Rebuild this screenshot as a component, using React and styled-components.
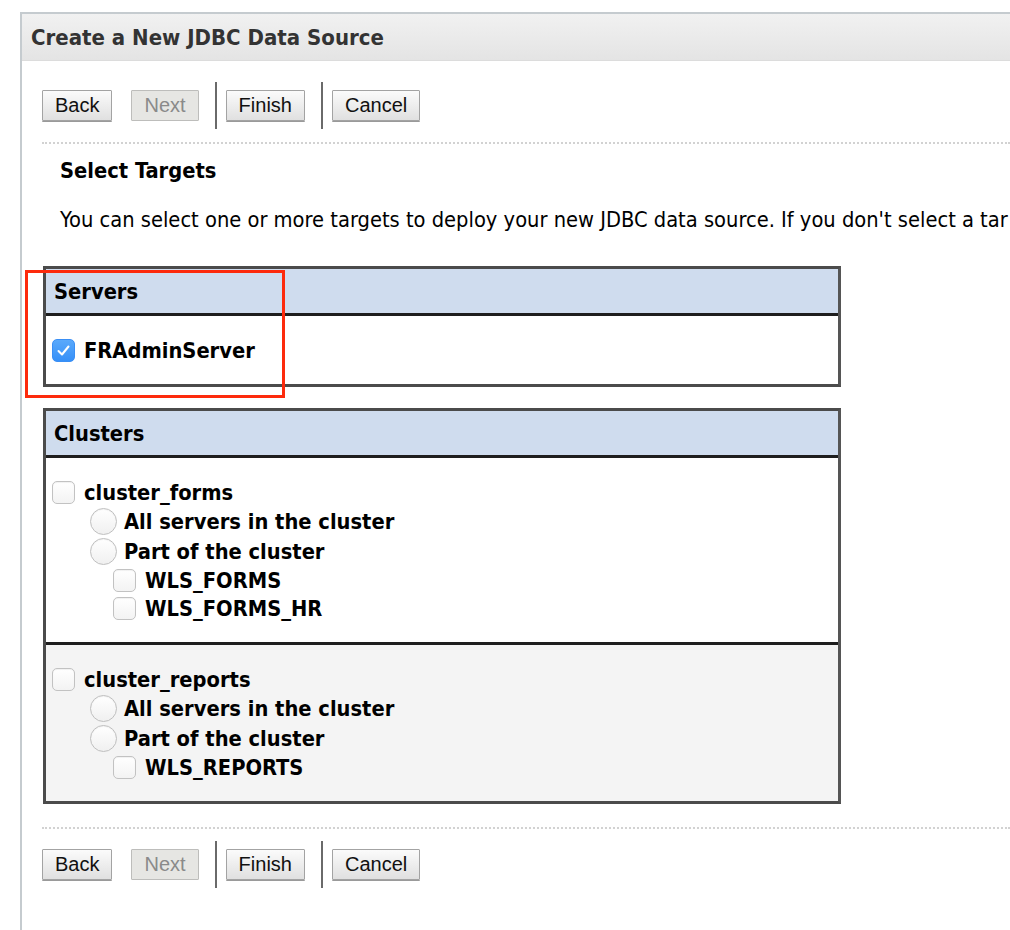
import React from "react";
import styled, { createGlobalStyle } from "styled-components";

const GlobalStyle = createGlobalStyle`
  body {
    margin: 0;
    background: #ffffff;
    font-family: "DejaVu Sans Condensed", "DejaVu Sans", sans-serif;
    color: #000;
    overflow: hidden;
  }
`;

const Page = styled.div`
  position: relative;
  margin: 12px 0 0 20px;
  height: 918px;
  overflow: hidden;
  border-left: 2px solid #c5cbcf;
  border-top: 2px solid #c5cbcf;
`;

const TitleBar = styled.div`
  height: 46px;
  display: flex;
  align-items: center;
  padding-left: 9px;
  background: linear-gradient(#f1f1f1, #e4e4e4);
  border-bottom: 1px solid #dcdcdc;
`;

const Title = styled.h1`
  margin: 0;
  font-size: 22px;
  font-weight: bold;
  color: #333333;
`;

const Content = styled.div`
  padding-left: 20px;
`;

const ButtonBar = styled.div`
  display: flex;
  align-items: center;
  height: 47px;
  padding-top: ${(p) => p.top}px;
`;

const Button = styled.button`
  height: 31px;
  padding: 0 12px;
  font-family: "Liberation Sans", Arial, sans-serif;
  font-size: 20px;
  border: 1px solid ${(p) => (p.disabled ? "#bdbdbb" : "#a3a3a3")};
  border-radius: 1px;
  color: ${(p) => (p.disabled ? "#8a8a8a" : "#111")};
  background: ${(p) =>
    p.disabled ? "#e6e6e3" : "linear-gradient(#fbfbfb, #e0e0e0)"};
  margin-right: ${(p) => p.gap || 0}px;
  box-shadow: ${(p) => (p.disabled ? "none" : "0 1px 0 #9a9a9a")};
`;

const Separator = styled.div`
  width: 2px;
  height: 47px;
  background: #6a6a6a;
  margin-right: 9px;
`;

const Dotted = styled.div`
  border-top: 2px dotted #d2d2d2;
  margin-top: ${(p) => p.top}px;
`;

const Section = styled.div`
  padding-left: 18px;
`;

const SectionTitle = styled.h2`
  margin: 15px 0 0;
  font-size: 21.7px;
  font-weight: bold;
  line-height: 24px;
`;

const Description = styled.p`
  margin: 25px 0 0;
  font-size: 21.7px;
  line-height: 24px;
  white-space: nowrap;
`;

const Table = styled.div`
  width: 792px;
  margin: ${(p) => p.top}px 0 0 1px;
  border: 3px solid #4b4b4b;
  border-right-color: #555;
`;

const HeaderCell = styled.div`
  height: 44px;
  display: flex;
  align-items: center;
  padding-left: 8px;
  background: #cfdcee;
  font-size: 21.7px;
  font-weight: bold;
  border-bottom: 3px solid #1e1e1e;
`;

const Body = styled.div`
  padding: ${(p) => p.pad}px 0;
  background: ${(p) => (p.shaded ? "#f4f4f4" : "#ffffff")};
  border-top: ${(p) => (p.divider ? "3px solid #1e1e1e" : "none")};
`;

const Row = styled.div`
  display: flex;
  align-items: center;
  height: ${(p) => (p.radio ? 30 : 28)}px;
  padding-left: ${(p) => p.indent}px;
  font-size: 21.7px;
  font-weight: bold;
  white-space: nowrap;
`;

const Box = styled.span`
  box-sizing: border-box;
  width: 23px;
  height: 23px;
  border-radius: 5px;
  margin-right: 9px;
  display: flex;
  align-items: center;
  justify-content: center;
  border: 1px solid ${(p) => (p.checked ? "#3a8ff5" : "#c2c2c2")};
  background: ${(p) =>
    p.checked ? "linear-gradient(#5aa9fb, #3690f8)" : "linear-gradient(#ffffff, #f3f3f3)"};
  box-shadow: ${(p) => (p.checked ? "none" : "inset 0 1px 1px rgba(0,0,0,0.06)")};
`;

const Radio = styled.span`
  box-sizing: border-box;
  width: 27px;
  height: 27px;
  border-radius: 50%;
  margin-right: 7px;
  border: 1px solid #bfbfbf;
  background: linear-gradient(#ffffff, #f0f0f0);
  box-shadow: inset 0 1px 1px rgba(0,0,0,0.05);
`;

const Highlight = styled.div`
  position: absolute;
  left: 3px;
  top: 256px;
  width: 254px;
  height: 122px;
  border: 3px solid #fd2a0c;
`;

const Check = ({ checked }) => (
  <Box checked={checked}>
    {checked && (
      <svg width="15" height="13" viewBox="0 0 15 13">
        <path
          d="M2.5 7 L6 10.5 L12.5 2.5"
          fill="none"
          stroke="#ffffff"
          strokeWidth="2"
          strokeLinecap="round"
          strokeLinejoin="round"
        />
      </svg>
    )}
  </Box>
);

const Buttons = ({ top }) => (
  <ButtonBar top={top}>
    <Button gap={19}>Back</Button>
    <Button disabled gap={16}>Next</Button>
    <Separator />
    <Button gap={16}>Finish</Button>
    <Separator />
    <Button>Cancel</Button>
  </ButtonBar>
);

const clusters = [
  { name: "cluster_forms", servers: ["WLS_FORMS", "WLS_FORMS_HR"] },
  { name: "cluster_reports", servers: ["WLS_REPORTS"] },
];

export default function App() {
  return (
    <>
      <GlobalStyle />
      <Page>
        <TitleBar>
          <Title>Create a New JDBC Data Source</Title>
        </TitleBar>
        <Content>
          <Buttons top={21} />
          <Dotted top={13} />
          <Section>
            <SectionTitle>Select Targets</SectionTitle>
            <Description>
              You can select one or more targets to deploy your new JDBC data source. If you don't select a tar
            </Description>
          </Section>
          <Table top={34}>
            <HeaderCell>Servers</HeaderCell>
            <Body pad={20}>
              <Row indent={6}>
                <Check checked />
                FRAdminServer
              </Row>
            </Body>
          </Table>
          <Table top={21}>
            <HeaderCell>Clusters</HeaderCell>
            {clusters.map((c, i) => (
              <Body key={c.name} pad={20} shaded={i > 0} divider={i > 0}>
                <Row indent={6}>
                  <Check />
                  {c.name}
                </Row>
                <Row radio indent={44}>
                  <Radio />
                  All servers in the cluster
                </Row>
                <Row radio indent={44}>
                  <Radio />
                  Part of the cluster
                </Row>
                {c.servers.map((s) => (
                  <Row key={s} indent={67}>
                    <Check />
                    {s}
                  </Row>
                ))}
              </Body>
            ))}
          </Table>
          <Dotted top={23} />
          <Buttons top={12} />
        </Content>
        <Highlight />
      </Page>
    </>
  );
}
